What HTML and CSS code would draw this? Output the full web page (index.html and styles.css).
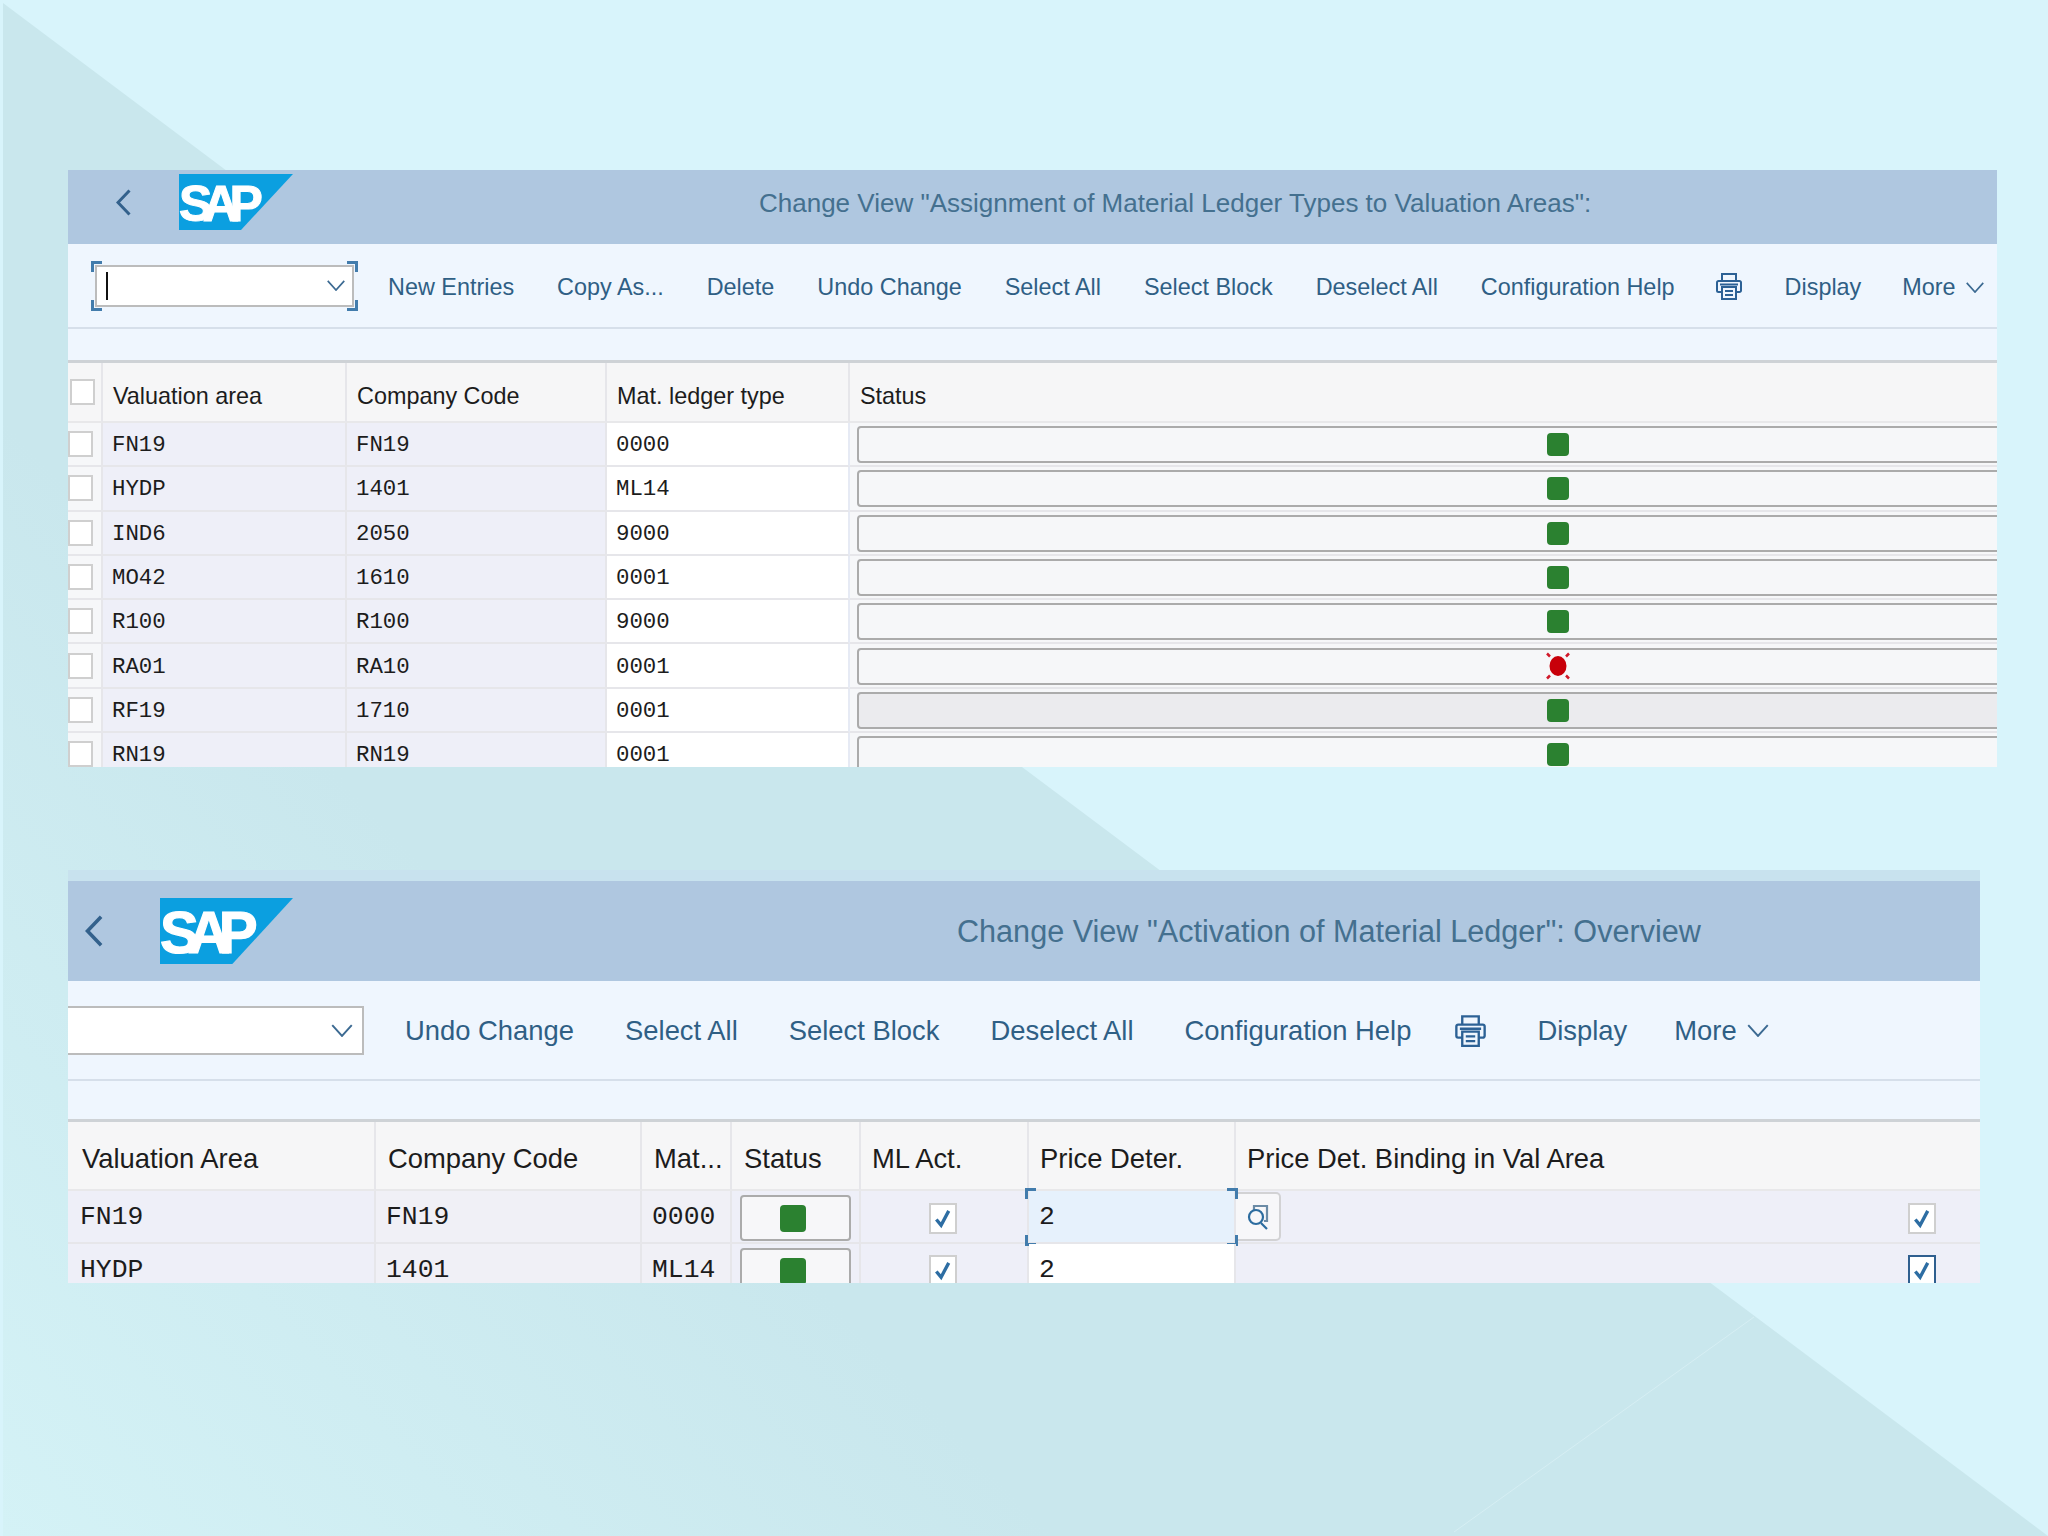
FILE: index.html
```html
<!DOCTYPE html>
<html lang="en">
<head>
<meta charset="utf-8">
<title>SAP Material Ledger</title>
<link rel="stylesheet" href="styles.css">
</head>
<body>
<svg class="backdrop" viewBox="0 0 2048 1536" aria-hidden="true">
  <defs>
    <linearGradient id="shade" gradientUnits="userSpaceOnUse" x1="0" y1="1536" x2="560" y2="1010">
      <stop offset="0" stop-color="#d4f2f6"/>
      <stop offset="1" stop-color="#c9e7ed"/>
    </linearGradient>
  </defs>
  <polygon points="3,3 2048,1536 3,1536" fill="url(#shade)"/>
  <line x1="1754" y1="1317" x2="1454" y2="1532" stroke="#d6eef3" stroke-width="1"/>
</svg>
<main class="page">
  <section class="panel panel-a">
    <header class="bar">
      <svg class="back" viewBox="0 0 15 27"><polyline points="13.5,1.5 2,13.5 13.5,25.5"/></svg>
      <svg class="logo" viewBox="0 0 114 56" preserveAspectRatio="none"><polygon points="0,0 114,0 62,56 0,56"/><text x="0" y="47">SAP</text></svg>
      <h1 class="title">Change View "Assignment of Material Ledger Types to Valuation Areas":</h1>
    </header>
    <nav class="tools">
      <div class="combo">
        <span class="caret"></span>
        <svg class="chev" viewBox="0 0 20 12"><polyline points="1,1 10,11 19,1"/></svg>
        <i class="corner tl"></i><i class="corner tr"></i><i class="corner bl"></i><i class="corner br"></i>
      </div>
      <span>New Entries</span><span>Copy As...</span><span>Delete</span><span>Undo Change</span><span>Select All</span><span>Select Block</span><span>Deselect All</span><span>Configuration Help</span>
      <svg class="printer" viewBox="0 0 26 28"><path d="M6 9V2h14v7M6 20H2.500A1.500 1.500 0 0 1 1 18.500v-8A1.500 1.500 0 0 1 2.500 9h21a1.500 1.500 0 0 1 1.500 1.500v8a1.500 1.500 0 0 1-1.500 1.500H20M6 15h14v12H6zM9 19h8M9 23h8M4 12.500h18"/></svg>
      <span>Display</span>
      <span class="more">More<svg class="chev" viewBox="0 0 20 12"><polyline points="1,1 10,11 19,1"/></svg></span>
    </nav>
    <div class="strip"></div>
    <div class="table">
      <div class="row head">
        <div class="cell pick"><b class="box"></b></div><div class="cell">Valuation area</div><div class="cell">Company Code</div><div class="cell">Mat. ledger type</div><div class="cell last">Status</div>
      </div>
      <div class="row"><div class="cell pick"><b class="box"></b></div><div class="cell data">FN19</div><div class="cell data">FN19</div><div class="cell data edit">0000</div><div class="cell state"><div class="btn"><b class="led"></b></div></div></div>
      <div class="row"><div class="cell pick"><b class="box"></b></div><div class="cell data">HYDP</div><div class="cell data">1401</div><div class="cell data edit">ML14</div><div class="cell state"><div class="btn"><b class="led"></b></div></div></div>
      <div class="row"><div class="cell pick"><b class="box"></b></div><div class="cell data">IND6</div><div class="cell data">2050</div><div class="cell data edit">9000</div><div class="cell state"><div class="btn"><b class="led"></b></div></div></div>
      <div class="row"><div class="cell pick"><b class="box"></b></div><div class="cell data">MO42</div><div class="cell data">1610</div><div class="cell data edit">0001</div><div class="cell state"><div class="btn"><b class="led"></b></div></div></div>
      <div class="row"><div class="cell pick"><b class="box"></b></div><div class="cell data">R100</div><div class="cell data">R100</div><div class="cell data edit">9000</div><div class="cell state"><div class="btn"><b class="led"></b></div></div></div>
      <div class="row"><div class="cell pick"><b class="box"></b></div><div class="cell data">RA01</div><div class="cell data">RA10</div><div class="cell data edit">0001</div><div class="cell state"><div class="btn"><svg class="alert" viewBox="0 0 26 28"><ellipse cx="13" cy="14" rx="8.500" ry="10"/><path d="M2 1.500l3 3M24 1.500l-3 3M2 26.500l3-3M24 26.500l-3-3"/></svg></div></div></div>
      <div class="row"><div class="cell pick"><b class="box"></b></div><div class="cell data">RF19</div><div class="cell data">1710</div><div class="cell data edit">0001</div><div class="cell state"><div class="btn hover"><b class="led"></b></div></div></div>
      <div class="row"><div class="cell pick"><b class="box"></b></div><div class="cell data">RN19</div><div class="cell data">RN19</div><div class="cell data edit">0001</div><div class="cell state"><div class="btn"><b class="led"></b></div></div></div>
    </div>
  </section>

  <section class="panel panel-b">
    <div class="fade"></div>
    <header class="bar">
      <svg class="back" viewBox="0 0 15 27"><polyline points="13.5,1.5 2,13.5 13.5,25.5"/></svg>
      <svg class="logo" viewBox="0 0 114 56" preserveAspectRatio="none"><polygon points="0,0 114,0 62,56 0,56"/><text x="0" y="47">SAP</text></svg>
      <h1 class="title">Change View "Activation of Material Ledger": Overview</h1>
    </header>
    <nav class="tools">
      <div class="combo">
        <svg class="chev" viewBox="0 0 20 12"><polyline points="1,1 10,11 19,1"/></svg>
      </div>
      <span>Undo Change</span><span>Select All</span><span>Select Block</span><span>Deselect All</span><span>Configuration Help</span>
      <svg class="printer" viewBox="0 0 26 28"><path d="M6 9V2h14v7M6 20H2.500A1.500 1.500 0 0 1 1 18.500v-8A1.500 1.500 0 0 1 2.500 9h21a1.500 1.500 0 0 1 1.500 1.500v8a1.500 1.500 0 0 1-1.500 1.500H20M6 15h14v12H6zM9 19h8M9 23h8M4 12.500h18"/></svg>
      <span>Display</span>
      <span class="more">More<svg class="chev" viewBox="0 0 20 12"><polyline points="1,1 10,11 19,1"/></svg></span>
    </nav>
    <div class="strip"></div>
    <div class="table">
      <div class="row head">
        <div class="cell">Valuation Area</div><div class="cell">Company Code</div><div class="cell">Mat...</div><div class="cell">Status</div><div class="cell">ML Act.</div><div class="cell">Price Deter.</div><div class="cell last">Price Det. Binding in Val Area</div>
      </div>
      <div class="row first">
        <div class="cell data">FN19</div><div class="cell data alt">FN19</div><div class="cell data alt">0000</div>
        <div class="cell state"><div class="btn"><b class="led"></b></div></div>
        <div class="cell mid"><b class="box on"><svg viewBox="0 0 20 22"><polyline points="3,12 8,18 16,3"/></svg></b></div>
        <div class="cell data field focus">2<i class="corner tl"></i><i class="corner tr"></i><i class="corner bl"></i><i class="corner br"></i></div>
        <div class="cell binding">
          <div class="help"><svg viewBox="0 0 26 28"><path class="sheet" d="M9 8V3h13v15h-3"/><circle cx="11" cy="14" r="7"/><path d="M16 20l6 6"/></svg></div>
          <b class="box on"><svg viewBox="0 0 20 22"><polyline points="3,12 8,18 16,3"/></svg></b>
        </div>
      </div>
      <div class="row">
        <div class="cell data">HYDP</div><div class="cell data alt">1401</div><div class="cell data alt">ML14</div>
        <div class="cell state"><div class="btn"><b class="led"></b></div></div>
        <div class="cell mid"><b class="box on"><svg viewBox="0 0 20 22"><polyline points="3,12 8,18 16,3"/></svg></b></div>
        <div class="cell data field">2</div>
        <div class="cell binding end"><b class="box on dark"><svg viewBox="0 0 20 22"><polyline points="3,12 8,18 16,3"/></svg></b></div>
      </div>
    </div>
  </section>
</main>
</body>
</html>
```
FILE: styles.css
```css
* { box-sizing: border-box; }
html, body { margin: 0; padding: 0; }
body {
  width: 2048px;
  height: 1536px;
  overflow: hidden;
  position: relative;
  background: #d8f4fb;
  font-family: "Liberation Sans", Arial, sans-serif;
}
.backdrop { position: absolute; left: 0; top: 0; width: 2048px; height: 1536px; }
.page { position: relative; padding: 170px 0 0 68px; }

.panel { overflow: hidden; background: #eff6fe; }
.panel-a { width: 1929px; height: 597px; --tool: 23.4px; --mono: 22.4px; }
.panel-b { width: 1912px; height: 413px; margin-top: 103px; --tool: 27.4px; --mono: 26.4px; }

.fade { height: 11px; background: #c8e2ee; }
.bar { display: flex; align-items: center; background: #afc7e0; }
.panel-a .bar { height: 74px; padding: 0 0 10px 48px; }
.panel-b .bar { height: 100px; padding-left: 17px; }
.back { fill: none; stroke: #33618c; stroke-width: 3; }
.panel-a .back { width: 15px; height: 27px; margin-right: 48px; }
.panel-b .back { width: 18px; height: 32px; margin-right: 57px; }
.logo { display: block; overflow: visible; }
.logo polygon { fill: #0b9fe0; }
.logo text {
  fill: #fff;
  stroke: #fff;
  stroke-width: 1;
  font: bold 50px "Liberation Sans", Arial, sans-serif;
  letter-spacing: -9.500px;
}
.panel-a .logo { width: 114px; height: 56px; margin-right: 466px; }
.panel-b .logo { width: 133px; height: 66px; margin-right: 664px; }
.title { margin: 0; font-weight: normal; color: #44708f; white-space: nowrap; }
.panel-a .title { font-size: 26px; margin-top: 2px; }
.panel-b .title { font-size: 30.600px; }

.tools {
  display: flex;
  align-items: center;
  border-bottom: 2px solid #d6dfea;
  color: #2f5f85;
  font-size: var(--tool);
  white-space: nowrap;
}
.panel-a .tools { height: 85px; padding-left: 27px; gap: 43px; }
.panel-a .tools > span { padding-top: 4px; }
.panel-b .tools { height: 100px; padding-top: 1px; gap: 51px; }
.combo {
  position: relative;
  display: flex;
  align-items: center;
  justify-content: space-between;
  background: #fff;
  border: 2px solid #bcbcbc;
}
.panel-a .combo { width: 259px; height: 42px; padding: 0 6px 0 9px; margin-right: -9px; }
.panel-b .combo { width: 296px; height: 49px; padding-right: 8px; margin-right: -10px; border-left: 0; justify-content: flex-end; }
.caret { width: 2px; height: 28px; background: #111; }
.chev { fill: none; stroke: #3c6a92; stroke-width: 1.800; }
.panel-a .chev { width: 20px; height: 11px; }
.panel-b .chev { width: 24px; height: 13px; }
.printer { fill: none; stroke: #2c6195; stroke-width: 2; flex: none; }
.panel-a .printer { width: 26px; height: 28px; margin-left: -2px; }
.panel-b .printer { width: 31px; height: 33px; margin-left: -7px; }
.more { display: flex; align-items: center; gap: 9px; }
.panel-a .more { margin-left: -2px; }
.panel-b .more { margin-left: -4px; }

.corner { position: absolute; width: 11px; height: 11px; border: 0 solid #427cac; }
.corner.tl { left: -6px; top: -6px; border-width: 3px 0 0 3px; }
.corner.tr { right: -6px; top: -6px; border-width: 3px 3px 0 0; }
.corner.bl { left: -6px; bottom: -6px; border-width: 0 0 3px 3px; }
.corner.br { right: -6px; bottom: -6px; border-width: 0 3px 3px 0; }
.focus .corner.tl, .focus .corner.bl { left: -4px; }
.focus .corner.tr, .focus .corner.br { right: -4px; }
.focus .corner.tl, .focus .corner.tr { top: -3px; }
.focus .corner.bl, .focus .corner.br { bottom: -4px; }

.strip { border-bottom: 3px solid #ced2d6; }
.panel-a .strip { height: 34px; }
.panel-b .strip { height: 41px; }

.table { background: #f6f7f9; color: #1c1c1c; }
.row { display: grid; }
.panel-a .row { grid-template-columns: 35px 244px 260px 243px 1fr; height: 44.300px; }
.panel-b .row { grid-template-columns: 308px 266px 90px 129px 168px 207px 1fr; height: 52px; }
.panel-a .row.head { height: 60px; }
.panel-b .row.head { height: 69px; }
.panel-b .row.first { height: 53px; }

.cell {
  display: flex;
  align-items: center;
  min-width: 0;
  border-right: 2px solid #e6e6ea;
  border-bottom: 2px solid #e6e6ea;
  white-space: nowrap;
}
.head .cell { background: #f6f6f7; font-size: var(--tool); border-bottom-color: #e8e8ea; }
.panel-a .head .cell { padding: 8px 0 0 10px; }
.panel-b .head .cell { padding: 7px 0 0 11px; }
.panel-b .head .cell:nth-child(1) { padding-left: 14px; }
.panel-b .head .cell:nth-child(2), .panel-b .head .cell:nth-child(3), .panel-b .head .cell:nth-child(4) { padding-left: 12px; }
.last { border-right: 0; }

.data { background: #eeeff8; font-family: "Liberation Mono", monospace; font-size: var(--mono); }
.panel-a .data { padding: 2px 0 0 9px; }
.panel-b .data { padding: 1px 0 0 12px; }
.panel-a .edit { background: #fff; border-right-color: #e6eaf4; }
.panel-b .alt { background: #f0f0f6; padding-left: 10px; }

.pick { background: #f6f7f9; }
.panel-a .head .pick { padding: 0 0 0 2px; }
.box { display: block; flex: none; background: #fff; border: 2px solid #cfcfcf; }
.pick .box { width: 25px; height: 26px; }

.state { background: #f6f7f9; border-right: 0; }
.panel-a .state { padding: 1px 0 0 7px; }
.btn {
  display: flex;
  align-items: center;
  background: #f6f7f9;
  border: 2px solid #ababab;
  border-radius: 4px;
}
.btn.hover { background: #ebebee; }
.panel-a .btn { width: 1200px; height: 37px; flex: none; padding-left: 688px; }
.led { display: block; width: 22px; height: 23px; background: #2b8130; border-radius: 4px; flex: none; }
.alert { width: 26px; height: 28px; margin-left: -2px; flex: none; }
.alert ellipse { fill: #c8000a; }
.alert path { stroke: #d0182a; stroke-width: 2.500; fill: none; }

.panel-b .state { padding: 4px 0 0 8px; border-right: 2px solid #e6e6ea; align-items: flex-start; background: #eeeff8; }
.panel-b .btn { width: 111px; height: 46px; flex: none; justify-content: center; padding-right: 6px; background: #f7f7f9; }
.panel-b .led { width: 26px; height: 27px; }

.mid { background: #eeeff8; justify-content: center; padding: 3px 3px 0 0; }
.panel-b .box.on { width: 28px; height: 31px; padding: 3px 2px; }
.box svg { display: block; width: 100%; height: 100%; fill: none; stroke: #2d6da3; stroke-width: 3.500; }
.box.dark { border-color: #2f5f8f; }

.field { position: relative; background: #fff; }
.panel-b .field { padding-left: 10px; }
.focus { background: #e6f1fc; }
.binding {
  justify-content: space-between;
  background: #eeeff8;
  border-right: 0;
  padding-right: 44px;
}
.binding .box { margin-top: 3px; }
.binding.end { justify-content: flex-end; }
.help {
  width: 45px;
  height: 49px;
  display: flex;
  align-items: center;
  justify-content: center;
  background: #f7f7f9;
  border: 2px solid #d2d2d4;
  border-left: 0;
  border-radius: 0 5px 5px 0;
}
.help svg { width: 26px; height: 28px; fill: none; stroke: #2c6c9f; stroke-width: 2.200; }
.help .sheet { stroke: #6b8ba6; }
```
